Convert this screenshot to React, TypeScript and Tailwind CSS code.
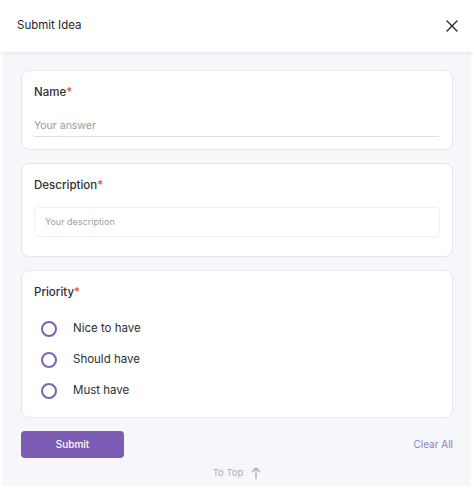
import React from 'react';

const options = ['Nice to have', 'Should have', 'Must have'];

function Label({ text }: { text: string }) {
  return (
    <div className="text-[11.5px] leading-[20px] font-medium text-[#2f2f2f]">
      {text}
      <span className="text-[#e5484d]">*</span>
    </div>
  );
}

export default function App() {
  return (
    <div className="w-full h-[489px] bg-white font-['Inter','Liberation_Sans',sans-serif]">
      {/* Header */}
      <header className="relative z-10 h-[52px] flex items-center justify-between pl-[17px] pr-[16px] bg-white shadow-[0_2px_4px_rgba(0,0,0,0.06)]">
        <span className="text-[11.5px] text-[#262626]">Submit Idea</span>
        <svg width="12" height="12" viewBox="0 0 12 12" className="text-[#2b2b2b]">
          <path d="M1 1 L11 11 M11 1 L1 11" stroke="currentColor" strokeWidth="1.4" strokeLinecap="round" />
        </svg>
      </header>

      {/* Form body */}
      <main className="mx-[3px] h-[434px] bg-[#f6f7fb] px-[18px] pt-[18px]">
        <div className="flex flex-col gap-[13px]">
          {/* Name */}
          <section className="bg-white border border-[#e4e6ee] rounded-[8px] pt-[11px] pb-[12px] pl-[12px] pr-[13px]">
            <Label text="Name" />
            <div className="mt-[12px] h-[23px] pt-[3px] border-b border-[#dedfe4] text-[10.5px] leading-[18px] text-[#9a9a9a]">
              Your answer
            </div>
          </section>

          {/* Description */}
          <section className="bg-white border border-[#e4e6ee] rounded-[8px] pt-[11px] pb-[19px] pl-[12px] pr-[12px]">
            <Label text="Description" />
            <div className="mt-[12px] h-[30px] flex items-center pl-[10px] border border-[#eef0f4] rounded-[4px] text-[9px] text-[#a0a0a0]">
              Your description
            </div>
          </section>

          {/* Priority */}
          <section className="bg-white border border-[#e4e6ee] rounded-[8px] pt-[11px] pb-[18px] pl-[12px] pr-[12px]">
            <Label text="Priority" />
            <div className="mt-[19px] flex flex-col gap-[15px] pl-[7px]">
              {options.map((o) => (
                <label key={o} className="flex items-center h-[16px]">
                  <span className="w-[16px] h-[16px] rounded-full border-2 border-[#7e62b5]" />
                  <span className="ml-[16px] text-[11.5px] text-[#2f2f2f]">{o}</span>
                </label>
              ))}
            </div>
          </section>
        </div>

        {/* Actions */}
        <div className="mt-[13px] flex items-center justify-between">
          <button className="w-[103px] h-[27px] rounded-[4px] bg-[#7c5cb4] text-white text-[10px] font-medium">
            Submit
          </button>
          <span className="text-[10px] text-[#8d7dbf]">Clear All</span>
        </div>
        <div className="mt-[8px] flex items-center justify-center gap-[8px] text-[9.5px] text-[#a9a9ba]">
          <span>To Top</span>
          <svg width="10" height="12" viewBox="0 0 10 12">
            <path d="M5 11.5 V1 M1.5 4.5 L5 1 L8.5 4.5" stroke="currentColor" strokeWidth="1.2" fill="none" strokeLinecap="round" strokeLinejoin="round" />
          </svg>
        </div>
      </main>
    </div>
  );
}
